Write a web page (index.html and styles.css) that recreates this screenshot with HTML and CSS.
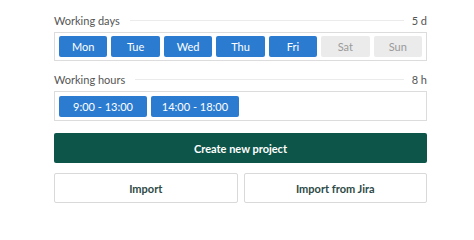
FILE: index.html
```html
<!DOCTYPE html>
<html>
<head>
<meta charset="utf-8">
<link rel="stylesheet" href="styles.css">
</head>
<body>
<div class="panel">
  <div class="section-head">
    <span class="label">Working days</span>
    <span class="rule"></span>
    <span class="value">5 d</span>
  </div>
  <div class="box days">
    <button class="chip on">Mon</button>
    <button class="chip on">Tue</button>
    <button class="chip on">Wed</button>
    <button class="chip on">Thu</button>
    <button class="chip on">Fri</button>
    <button class="chip off">Sat</button>
    <button class="chip off">Sun</button>
  </div>
  <div class="section-head">
    <span class="label">Working hours</span>
    <span class="rule"></span>
    <span class="value">8 h</span>
  </div>
  <div class="box hours">
    <button class="chip on slot">9:00 - 13:00</button>
    <button class="chip on slot">14:00 - 18:00</button>
  </div>
  <button class="primary">Create new project</button>
  <div class="row">
    <button class="secondary">Import</button>
    <button class="secondary">Import from Jira</button>
  </div>
</div>
</body>
</html>
```
FILE: styles.css
```css
* { box-sizing: border-box; }
html, body { margin: 0; padding: 0; background: #fff; }
body {
  font-family: Lato, "Open Sans", sans-serif;
  width: 474px;
  height: 228px;
  overflow: hidden;
}
.panel {
  width: 373px;
  margin: 0 0 0 54px;
  padding-top: 12px;
  display: flex;
  flex-direction: column;
}
.section-head {
  display: flex;
  align-items: center;
  height: 16px;
  gap: 8px;
  margin-bottom: 4px;
}
.label {
  font-size: 11px;
  color: #555;
}
.value {
  font-size: 11px;
  color: #555;
}
.rule {
  flex: 1;
  height: 1px;
  background: #ebebeb;
  margin-left: 2px;
}
.box {
  border: 1px solid #dcdcdc;
  padding: 3px 4px;
  display: flex;
  gap: 4px;
}
.days { height: 29px; margin-bottom: 10px; }
.hours { height: 30px; margin-bottom: 12px; padding-top: 4px; }
.chip {
  border: none;
  border-radius: 2px;
  font-family: inherit;
  font-size: 11px;
  height: 21px;
  padding: 0;
  flex: 1;
}
.chip.on { background: #2b7cd0; color: #fff; }
.chip.off { background: #ebebeb; color: #9a9a9a; }
.chip.slot { flex: 0 0 88px; }
.primary {
  height: 30px;
  border: none;
  border-radius: 2px;
  background: #0d5548;
  color: #fff;
  font-family: inherit;
  font-weight: 700;
  font-size: 11px;
  margin-bottom: 10px;
}
.row {
  display: flex;
  gap: 6px;
}
.secondary {
  flex: 1;
  height: 30px;
  background: #fff;
  border: 1px solid #d9d9d9;
  border-radius: 2px;
  color: #2d4a46;
  font-family: inherit;
  font-weight: 700;
  font-size: 11px;
}
```
